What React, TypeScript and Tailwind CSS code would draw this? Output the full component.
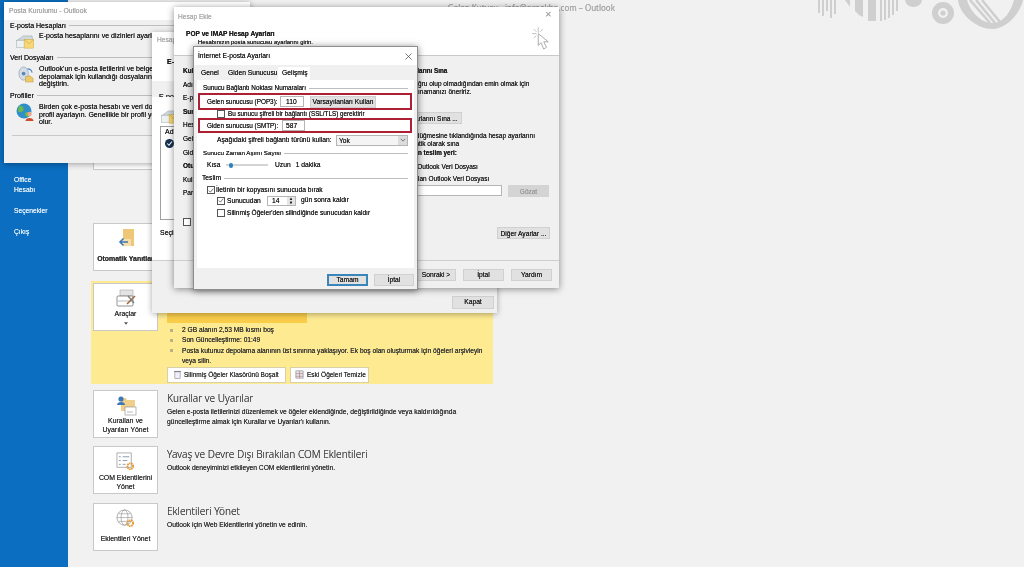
import React from "react";

const font = { fontFamily: '"Liberation Sans", Arial, sans-serif' };

function Btn({ children, cls = "" }: { children: React.ReactNode; cls?: string }) {
  return <div className={"flex items-center justify-center bg-[#e1e1e1] border border-[#d0d0d0] text-[6.7px] text-[#222] whitespace-nowrap " + cls}>{children}</div>;
}

function Check({ on = false, cls = "" }: { on?: boolean; cls?: string }) {
  return (
    <span className={"inline-flex items-center justify-center w-[8px] h-[8px] bg-white border border-[#555] shrink-0 " + cls}>
      {on && <svg viewBox="0 0 8 8" className="w-[7px] h-[7px]"><path d="M1 4 L3.2 6.2 L7 1.5" fill="none" stroke="#333" strokeWidth="0.9" /></svg>}
    </span>
  );
}

function Group({ title, line = "" }: { title: string; line?: string }) {
  return (
    <div className={"flex items-center gap-[3px] text-[#222] whitespace-nowrap " + line}>
      <span>{title}</span>
      <span className="flex-1 h-px bg-[#bdbdbd]" />
    </div>
  );
}

function MailIcon() {
  return (
    <svg viewBox="0 0 22 16" className="w-[20px] h-[14px] shrink-0">
      <path d="M2 6 L9 1 L19 1 L20 6 Z" fill="#cfd8dc" stroke="#8b9aa3" strokeWidth="0.5" />
      <rect x="1" y="6" width="13" height="8" fill="#eef1f2" stroke="#90a0a8" strokeWidth="0.5" />
      <rect x="10" y="5" width="11" height="10" fill="#f6d878" stroke="#c9a23c" strokeWidth="0.5" />
      <path d="M10 5 L15.5 10 L21 5" fill="none" stroke="#c9a23c" strokeWidth="0.6" />
    </svg>
  );
}

function DataIcon() {
  return (
    <svg viewBox="0 0 18 18" className="w-[17px] h-[17px] shrink-0">
      <ellipse cx="7" cy="8" rx="5" ry="7" fill="#d4dde6" stroke="#7f93a8" strokeWidth="0.6" />
      <circle cx="7" cy="8" r="2" fill="#5c87b8" />
      <path d="M11 3 a5 5 0 0 1 5 4" fill="none" stroke="#4f86c6" strokeWidth="1.2" />
      <path d="M9 11 L13 11 L13 10 L17 13 L17 17 L9 17 Z" fill="#efc967" stroke="#bd9238" strokeWidth="0.5" />
    </svg>
  );
}

function GlobeIcon() {
  return (
    <svg viewBox="0 0 18 18" className="w-[18px] h-[18px] shrink-0">
      <circle cx="8" cy="8" r="7.5" fill="#2e8fc9" />
      <path d="M3 3 C6 2 9 5 7 8 C5 9 3 10 2 8 Z M9 10 C12 8 15 9 14 12 C12 15 9 14 9 10 Z" fill="#6cba4c" />
      <circle cx="13.5" cy="11" r="2.2" fill="#e9a48b" />
      <path d="M9.5 18 C9.5 14 17.5 14 17.5 18 Z" fill="#d24a2c" />
    </svg>
  );
}

function ToolBox({ children, cls = "" }: { children: React.ReactNode; cls?: string }) {
  return (
    <div className={"w-[65px] h-[48px] shrink-0 bg-white border border-[#c9c9c9] flex flex-col items-center pt-[4px] text-[6.9px] leading-[9px] text-[#333] text-center " + cls}>
      {children}
    </div>
  );
}

function ToolRow({ icon, label, title, desc, cls = "" }: { icon: React.ReactNode; label: React.ReactNode; title: string; desc: React.ReactNode; cls?: string }) {
  return (
    <div className={"flex gap-[9px] " + cls}>
      <ToolBox>
        <div className="h-[21px] flex items-center">{icon}</div>
        {label}
      </ToolBox>
      <div>
        <div className="font-['Noto_Sans'] text-[10.1px] leading-[16px] text-[#444] font-light whitespace-nowrap">{title}</div>
        <div className="mt-[1px] text-[6.7px] leading-[9.5px] text-[#333] whitespace-nowrap">{desc}</div>
      </div>
    </div>
  );
}

function GearBadge() {
  return <circle cx="15" cy="15" r="3" fill="none" stroke="#e39a34" strokeWidth="2" strokeDasharray="1.5 0.6" />;
}

function Backstage() {
  return (
    <div className="flex w-[1024px] h-[567px]">
      <div className="w-[68px] shrink-0 bg-[#0b6ec0] pt-[175px] pl-[14px] text-[6.7px] leading-[10px] text-[#e4f0fa]">
        <div>Office<br />Hesabı</div>
        <div className="mt-[11px]">Seçenekler</div>
        <div className="mt-[11px]">Çıkış</div>
      </div>
      <div className="flex-1 bg-[#f1f1f1] pl-[25px]">
        <div className="font-['Noto_Sans'] w-[522px] text-right h-[16px] pt-[2px] text-[8px] leading-[12px] text-[#a9a9a9] whitespace-nowrap">Gelen Kutusu - info@ornekbo.com – Outlook</div>
        <ToolBox cls="mt-[106px]"><span /></ToolBox>
        <ToolRow
          cls="mt-[53px]"
          icon={
            <svg viewBox="0 0 20 22" className="w-[20px] h-[22px]">
              <rect x="7" y="1" width="11" height="17" fill="#efc779" />
              <rect x="7" y="11" width="8" height="7" fill="#f7dfa9" />
              <path d="M12 14 H4 M7.5 10.5 L4 14 L7.5 17.5" fill="none" stroke="#3f77b5" strokeWidth="1.6" />
            </svg>
          }
          label={<span className="mt-[5px] whitespace-nowrap font-bold text-[#333]">Otomatik Yanıtlar</span>}
          title=""
          desc=""
        />
        <div className="-ml-[2px] mt-[10px] w-[402px] h-[103px] bg-[#fdea91] px-[2px] pt-[2px] flex gap-[9px]">
          <ToolBox>
            <div className="h-[21px] flex items-center">
              <svg viewBox="0 0 22 20" className="w-[22px] h-[20px]">
                <rect x="5" y="1" width="13" height="6" fill="#e4e4e4" stroke="#999" strokeWidth="0.5" />
                <rect x="2" y="7" width="16" height="10" rx="1" fill="#fff" stroke="#777" strokeWidth="0.8" />
                <path d="M3 12 H17" stroke="#888" strokeWidth="0.6" />
                <path d="M12 15 L20 7" stroke="#a3683c" strokeWidth="1.6" />
                <path d="M13 7 L19 14" stroke="#7a7a7a" strokeWidth="1.2" />
              </svg>
            </div>
            Araçlar
            <svg viewBox="0 0 6 4" className="w-[4px] h-[3px] mt-[4px]"><path d="M0 0 H6 L3 4 Z" fill="#555" /></svg>
          </ToolBox>
          <div className="flex-1 min-w-0">
            <div className="w-[140px] h-[40px] bg-[#f9cd4a]" />
            <div className="mt-[2px] text-[6.65px] leading-[10.4px] text-[#333]">
              {["2 GB alanın 2,53 MB kısmı boş", "Son Güncelleştirme: 01:49"].map((t) => (
                <div key={t} className="flex items-center whitespace-nowrap">
                  <span className="w-[3px] h-[3px] bg-[#b9b189] ml-[3px] mr-[9px]" />{t}
                </div>
              ))}
              <div className="flex whitespace-nowrap">
                <span className="w-[3px] h-[3px] bg-[#b9b189] ml-[3px] mr-[9px] mt-[3px]" />
                <span>Posta kutunuz depolama alanının üst sınırına yaklaşıyor. Ek boş olan oluşturmak için öğeleri arşivleyin<br />veya silin.</span>
              </div>
            </div>
            <div className="flex gap-[4px] text-[6.5px] text-[#333]">
              <div className="h-[16px] w-[119px] bg-white border border-[#d8d0a8] flex items-center gap-[3px] pl-[6px] whitespace-nowrap">
                <svg viewBox="0 0 8 10" className="w-[7px] h-[9px] shrink-0"><rect x="1" y="2" width="6" height="7.5" fill="#eef" stroke="#777" strokeWidth="0.6" /><path d="M0 1.5 H8" stroke="#777" /></svg>
                Silinmiş Öğeler Klasörünü Boşalt
              </div>
              <div className="h-[16px] w-[79px] bg-white border border-[#d8d0a8] flex items-center gap-[3px] pl-[4px] whitespace-nowrap">
                <svg viewBox="0 0 10 10" className="w-[9px] h-[9px] shrink-0"><rect x="1" y="1" width="8" height="8" fill="#e5e5e5" stroke="#777" strokeWidth="0.6" /><path d="M1 4 H9 M1 7 H9 M5 1 V9" stroke="#a67" strokeWidth="0.6" /></svg>
                Eski Öğeleri Temizle
              </div>
            </div>
          </div>
        </div>
        <ToolRow
          cls="mt-[6px]"
          icon={
            <svg viewBox="0 0 22 21" className="w-[22px] h-[21px]">
              <path d="M6 3 H11 L12 5 H20 V16 H6 Z" fill="#f0cf8a" />
              <circle cx="6" cy="4" r="2.6" fill="#3f77b5" />
              <path d="M2 10 C2 6 10 6 10 10 Z" fill="#3f77b5" />
              <rect x="10" y="12" width="11" height="8" fill="#fff" stroke="#8a8a8a" strokeWidth="0.6" />
              <path d="M12 17 H18" stroke="#8a8a8a" strokeWidth="0.6" />
            </svg>
          }
          label={<>Kuralları ve<br />Uyarıları Yönet</>}
          title="Kurallar ve Uyarılar"
          desc={<>Gelen e-posta iletilerinizi düzenlemek ve öğeler eklendiğinde, değiştirildiğinde veya kaldırıldığında<br />güncelleştirme almak için Kurallar ve Uyarılar'ı kullanın.</>}
        />
        <ToolRow
          cls="mt-[8px]"
          icon={
            <svg viewBox="0 0 20 20" className="w-[19px] h-[19px]">
              <rect x="1" y="1" width="15" height="15" fill="#fff" stroke="#8a8a8a" strokeWidth="0.7" />
              <path d="M3 5 H5 M7 5 H14 M3 9 H5 M7 9 H12 M3 13 H5 M7 13 H10" stroke="#6b7f95" strokeWidth="0.8" />
              <GearBadge />
            </svg>
          }
          label={<span className="mt-[1px]">COM Eklentilerini<br />Yönet</span>}
          title="Yavaş ve Devre Dışı Bırakılan COM Eklentileri"
          desc="Outlook deneyiminizi etkileyen COM eklentilerini yönetin."
        />
        <ToolRow
          cls="mt-[9px]"
          icon={
            <svg viewBox="0 0 20 20" className="w-[19px] h-[19px]">
              <circle cx="9" cy="9" r="8" fill="#fff" stroke="#8a8a8a" strokeWidth="0.7" />
              <ellipse cx="9" cy="9" rx="3.6" ry="8" fill="none" stroke="#8a8a8a" strokeWidth="0.6" />
              <path d="M1 9 H17 M2.5 5 H15.5 M2.5 13 H15.5" stroke="#8a8a8a" strokeWidth="0.6" />
              <GearBadge />
            </svg>
          }
          label={<span className="mt-[5px] whitespace-nowrap">Eklentileri Yönet</span>}
          title="Eklentileri Yönet"
          desc="Outlook için Web Eklentilerini yönetin ve edinin."
        />
      </div>
    </div>
  );
}

function Decor() {
  return (
    <svg viewBox="0 0 244 30" className="absolute top-0 right-0 w-[244px] h-[30px]">
      <g fill="#cfcfcf">
        <rect x="38" y="0" width="2" height="13" />
        <rect x="42" y="0" width="2" height="16" />
        <rect x="46" y="0" width="2" height="11" />
        <rect x="50" y="0" width="2" height="18" />
        <rect x="54" y="0" width="2" height="14" />
        <path d="M65 0 L70 7 L70 0 Z" />
        <path d="M75 0 H83 V17 Q78 15 75 11 Z" />
        <rect x="88" y="0" width="8" height="21" />
        <path d="M100 0 H102 V21 H100 Z M104 0 H106 V20 H104 Z M108 0 H110 V18 H108 Z M112 0 H114 V15 H112 Z M116 0 H118 V11 H116 Z" />
        <path d="M125 0 H142 Q141 7 133 7 Q126 6 125 0 Z" />
      </g>
      <circle cx="163" cy="13" r="8" fill="none" stroke="#cfcfcf" strokeWidth="6" />
      <circle cx="163" cy="13" r="2.6" fill="#cfcfcf" />
      <path d="M178 0 C180 16 198 29 212 29 C226 29 240 14 243 0 H234 C231 11 224 23 212 23 C201 23 190 11 187 0 Z" fill="#cfcfcf" />
      <path d="M190 0 L210 23 M196 0 L215 23 M202 0 L220 22" stroke="#cfcfcf" strokeWidth="2.5" />
    </svg>
  );
}

function SetupWindow() {
  return (
    <div className="absolute left-[4px] top-[2px] w-[246px] h-[161px] bg-[#f0f0f0] shadow-[0_1px_6px_rgba(0,0,0,0.35)]">
      <div className="h-[18px] bg-white pl-[5px] flex items-center justify-between pr-[6px] text-[6.8px] text-[#a6a6a6]">
        <span>Posta Kurulumu - Outlook</span>
        <span className="text-[#aaa] text-[8px]">✕</span>
      </div>
      <div className="px-[6px] pt-[1px] text-[7px] leading-[7.6px] text-[#222] whitespace-nowrap">
        <Group title="E-posta Hesapları" line="h-[9px]" />
        <div className="flex pl-[5px] h-[23px]">
          <div className="mt-[5px] mr-[4px]"><MailIcon /></div>
          <div className="mt-[2px]">E-posta hesaplarını ve dizinleri ayarlayın.</div>
        </div>
        <Group title="Veri Dosyaları" line="h-[9px]" />
        <div className="flex pl-[7px] h-[29px]">
          <div className="mt-[4px] mr-[5px]"><DataIcon /></div>
          <div className="mt-[3px]">Outlook'un e-posta iletilerini ve belgeleri<br />depolamak için kullandığı dosyaların ayarlarını<br />değiştirin.</div>
        </div>
        <Group title="Profiller" line="h-[9px]" />
        <div className="flex pl-[6px] h-[35px]">
          <div className="mt-[3px] mr-[5px]"><GlobeIcon /></div>
          <div className="mt-[3px]">Birden çok e-posta hesabı ve veri dosyası içeren<br />profil ayarlayın. Genellikle bir profil yeterli<br />olur.</div>
        </div>
        <div className="h-px bg-[#c9c9c9] ml-[2px]" />
      </div>
    </div>
  );
}

function AccountsWindow() {
  return (
    <div className="absolute left-[152px] top-[32px] w-[345px] h-[281px] bg-[#f0f0f0] shadow-[0_1px_6px_rgba(0,0,0,0.35)] flex flex-col">
      <div className="h-[25px] bg-white pl-[5px] pt-[3px] text-[6.6px] text-[#aaa]">Hesap Ayarları</div>
      <div className="h-[24px] bg-white pl-[15px] text-[7px] font-bold text-[#222]">E-posta Hesapları</div>
      <div className="pl-[7px] pt-[12px] h-[16px] leading-[8px] bg-[#f0f0f0] text-[7px] text-[#222]">E-posta</div>
      <div className="flex-1 bg-white pl-[8px] pt-[13px] text-[7px] text-[#222]">
        <MailIcon />
        <div className="mt-[2px] h-[94px] w-[300px] border border-[#a0a0a0] pl-[4px]">
          Adı
          <div className="mt-[1px]">
            <svg viewBox="0 0 10 10" className="w-[9px] h-[9px]"><circle cx="5" cy="5" r="5" fill="#16324f" /><path d="M2.5 5 L4.4 7 L7.7 3" fill="none" stroke="#fff" strokeWidth="1.2" /></svg>
          </div>
        </div>
        <div className="mt-[8px]">Seçili</div>
      </div>
      <div className="h-[53px] bg-[#f0f0f0] border-t border-[#cfcfcf] flex justify-end items-end pb-[4px] pr-[3px]">
        <Btn cls="w-[42px] h-[13px]">Kapat</Btn>
      </div>
    </div>
  );
}

function AddAccountWindow() {
  const left = [
    ["Kullanıcı Bilgileri", true], ["Adınız:", false], ["E-posta Adresi:", false], ["Sunucu Bilgileri", true],
    ["Hesap Türü:", false], ["Gelen posta sunucusu:", false], ["Giden posta sunucusu:", false], ["Oturum Açma Bilgileri", true],
    ["Kullanıcı Adı:", false], ["Parola:", false],
  ] as const;
  return (
    <div className="absolute left-[174px] top-[7px] w-[385px] h-[281px] bg-[#f0f0f0] shadow-[0_1px_7px_rgba(0,0,0,0.45)] flex flex-col text-[6.5px] text-[#222]">
      <div className="relative h-[49px] bg-white border-b border-[#c9c9c9] pl-[12px] pt-[22px] shrink-0 leading-[9px]">
        <div className="absolute left-[4px] top-[5px] text-[6.6px] text-[#aaa]">Hesap Ekle</div>
        <div className="absolute right-[7px] top-[3px] text-[8px] text-[#aaa]">✕</div>
        <div className="font-bold text-[#222] text-[6.6px]">POP ve IMAP Hesap Ayarları</div>
        <div className="pl-[12px] text-[5.9px]">Hesabınızın posta sunucusu ayarlarını girin.</div>
        <svg viewBox="0 0 22 30" className="absolute right-[8px] top-[19px] w-[20px] h-[28px]">
          <g stroke="#b5b5b5" strokeWidth="0.9">
            <path d="M8 1 V7 M1 8 H6 M3 3 L6 6 M13 3 L10 6 M3 13 L6 10" />
          </g>
          <path d="M8 8 L8 21 L11 18 L14 25 L17 23 L14 17 L19 17 Z" fill="#fff" stroke="#9a9a9a" strokeWidth="0.9" />
        </svg>
      </div>
      <div className="flex-1 flex min-h-0">
        <div className="w-[192px] shrink-0 pl-[9px] pt-[8px] leading-[13.6px] whitespace-nowrap">
          {left.map(([t, b], i) => <div key={i} className={b ? "font-bold" : ""}>{t}</div>)}
          <Check cls="mt-[18px]" />
        </div>
        <div className="w-[193px] min-w-0 pl-[17px] pt-[11px] leading-[7.4px] whitespace-nowrap">
          <div className="font-bold text-[6.3px]">Hesap Ayarlarını Sına</div>
          <div className="mt-[6px]">Girdilerin doğru olup olmadığından emin olmak için<br />hesabınızı sınamanızı öneririz.</div>
          <div className="mt-[17px] h-[12px] w-[79px] flex items-center justify-center bg-[#e1e1e1] border border-[#d0d0d0]">Hesap Ayarlarını Sına ...</div>
          <div className="mt-[8px] pl-[18px]">'İleri' düğmesine tıklandığında hesap ayarlarını<br />otomatik olarak sına</div>
          <div className="mt-[2px] font-bold text-[6.3px]">Yeni iletilerin teslim yeri:</div>
          <div className="mt-[7px] pl-[20px]">Yeni Outlook Veri Dosyası</div>
          <div className="mt-[4px] pl-[20px]">Var olan Outlook Veri Dosyası</div>
          <div className="flex mt-[3px] gap-[6px] items-start pl-[3px]">
            <div className="w-[116px] h-[11px] bg-white border border-[#b5b5b5]" />
            <div className="w-[41px] h-[12px] bg-[#d4d4d4] text-[#9a9a9a] flex items-center justify-center">Gözat</div>
          </div>
          <div className="flex justify-end pr-[9px] mt-[30px]">
            <Btn cls="w-[53px] h-[12px]">Diğer Ayarlar ...</Btn>
          </div>
        </div>
      </div>
      <div className="h-[28px] border-t border-[#cfcfcf] flex justify-end gap-[7px] pt-[8px] pr-[7px] shrink-0">
        <Btn cls="w-[40px] h-[12px]">Sonraki &gt;</Btn>
        <Btn cls="w-[41px] h-[12px]">İptal</Btn>
        <Btn cls="w-[41px] h-[12px]">Yardım</Btn>
      </div>
    </div>
  );
}

function SettingsDialog() {
  return (
    <div className="absolute left-[193px] top-[46px] w-[225px] h-[244px] bg-[#f0f0f0] border border-[#8e8e8e] shadow-[0_1px_7px_rgba(0,0,0,0.5)] flex flex-col text-[6.7px] text-[#222] leading-[10px] whitespace-nowrap">
      <div className="h-[18px] bg-white flex items-center justify-between pl-[4px] pr-[5px] shrink-0 text-[6.7px]">
        <span>İnternet E-posta Ayarları</span>
        <svg viewBox="0 0 8 8" className="w-[7px] h-[7px]"><path d="M0.5 0.5 L7.5 7.5 M7.5 0.5 L0.5 7.5" stroke="#444" strokeWidth="0.8" /></svg>
      </div>
      <div className="h-[15px] flex items-end pl-[4px] shrink-0">
        <div className="w-[27px] pl-[3px] pb-[2px]">Genel</div>
        <div className="w-[53px] pl-[3px] pb-[2px]">Giden Sunucusu</div>
        <div className="w-[32px] h-[13px] pl-[4px] pt-[1px] bg-white">Gelişmiş</div>
      </div>
      <div className="mx-[3px] h-[188px] bg-white px-[1px] pt-[3px] shrink-0">
        <Group title="Sunucu Bağlantı Noktası Numaraları" line="pl-[5px] pr-[5px] text-[6.35px]" />
        <div className="flex items-center h-[17px] border-2 border-[#ad1f33] pl-[7px] w-[214px]">
          <span className="w-[73px] text-[6.35px]">Gelen sunucusu (POP3):</span>
          <div className="w-[24px] h-[11px] border border-[#b5b5b5] pl-[5px] leading-[9px]">110</div>
          <Btn cls="ml-[6px] w-[66px] h-[12px]">Varsayılanları Kullan</Btn>
        </div>
        <div className="flex items-center gap-[3px] pl-[19px] h-[8px]">
          <Check />
          <span className="text-[6.3px]">Bu sunucu şifreli bir bağlantı (SSL/TLS) gerektirir</span>
        </div>
        <div className="flex items-center h-[15px] border-2 border-[#ad1f33] pl-[7px] w-[214px]">
          <span className="w-[75px] text-[6.35px]">Giden sunucusu (SMTP):</span>
          <div className="w-[23px] h-[11px] border border-[#b5b5b5] pl-[3px] leading-[9px]">587</div>
        </div>
        <div className="flex items-center pl-[19px] h-[12px] mt-[1px]">
          <span className="w-[119px]">Aşağıdaki şifreli bağlantı türünü kullan:</span>
          <div className="w-[72px] h-[11px] border border-[#b5b5b5] bg-[#f4f4f4] pl-[2px] flex items-center justify-between leading-[9px]">
            Yok
            <span className="w-[9px] h-[9px] bg-[#dcdcdc] flex items-center justify-center">
              <svg viewBox="0 0 8 5" className="w-[6px] h-[4px]"><path d="M1 1 L4 4 L7 1" fill="none" stroke="#555" /></svg>
            </span>
          </div>
        </div>
        <Group title="Sunucu Zaman Aşımı Sayısı" line="pl-[5px] pr-[5px] mt-[2px] text-[6.2px]" />
        <div className="flex items-center h-[12px] pl-[9px] mt-[1px]">
          <span className="w-[19px]">Kısa</span>
          <span className="relative w-[42px] h-[2px] bg-[#d4d4d4]">
            <span className="absolute left-[3px] -top-[1.5px] w-[4px] h-[5px] rounded-full bg-[#2f7fbf]" />
          </span>
          <span className="ml-[7px]">Uzun</span>
          <span className="ml-[5px]">1 dakika</span>
        </div>
        <Group title="Teslim" line="pl-[4px] pr-[5px] mt-[2px]" />
        <div className="flex items-center gap-[1px] pl-[9px] mt-[2px] h-[10px]">
          <Check on />
          <span>İletinin bir kopyasını sunucuda bırak</span>
        </div>
        <div className="flex items-center gap-[2px] pl-[19px] h-[11px]">
          <Check on />
          <span className="w-[38px]">Sunucudan</span>
          <div className="w-[29px] h-[10px] border border-[#b5b5b5] pl-[4px] flex justify-between items-center leading-[8px]">
            14
            <span className="w-[8px] h-[8px] bg-[#e5e5e5] text-[4px] leading-[4px] text-center">▲<br />▼</span>
          </div>
          <span className="ml-[3px] -mt-[1px]">gün sonra kaldır</span>
        </div>
        <div className="flex items-center gap-[2px] pl-[19px] mt-[1px] h-[12px]">
          <Check />
          <span className="text-[6.6px]">Silinmiş Öğeler'den silindiğinde sunucudan kaldır</span>
        </div>
      </div>
      <div className="flex justify-end gap-[6px] pt-[6px] pr-[3px]">
        <div className="w-[41px] h-[12px] flex items-center justify-center bg-[#e1e1e1] border-2 border-[#3b86b8]">Tamam</div>
        <Btn cls="w-[40px] h-[12px]">İptal</Btn>
      </div>
    </div>
  );
}

export default function App() {
  return (
    <div style={font} className="relative w-[1024px] h-[567px] overflow-hidden bg-[#f1f1f1] blur-[0.3px] [text-shadow:0_0_0.4px_currentColor]">
      <Backstage />
      <Decor />
      <SetupWindow />
      <AccountsWindow />
      <AddAccountWindow />
      <SettingsDialog />
    </div>
  );
}
